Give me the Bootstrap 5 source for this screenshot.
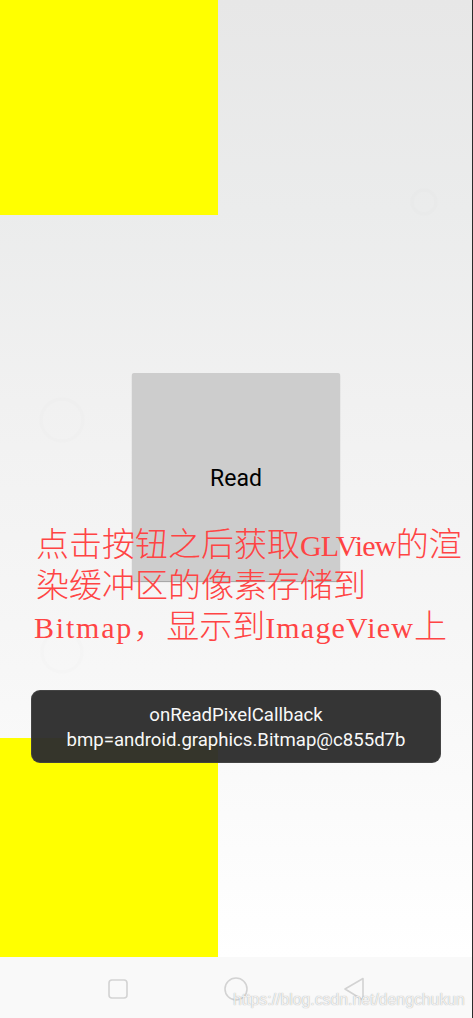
<!DOCTYPE html>
<html lang="zh">
<head>
<meta charset="utf-8">
<title>Read</title>
<link href="https://cdn.jsdelivr.net/npm/bootstrap@5.3.0/dist/css/bootstrap.min.css" rel="stylesheet">
<style>
html,body{height:100%;margin:0;overflow:hidden;background:#2b2b2b}
.phone-app{height:957px;width:472px;background:linear-gradient(180deg,#e7e7e7 0%,#ebecec 22%,#f1f1f1 42%,#f7f7f7 70%,#fff 100%);position:relative}
.fill-block{width:218px;height:215px;background:#ff0;flex:none}
.fill-block.lower{height:219px}
.read-btn{width:208px;height:208px;background:#cdcdcd;border:0;border-radius:2px;box-shadow:0 1px 1px rgba(0,0,0,.35);font:400 23px/1 Roboto,sans-serif;color:#000;padding:4px 0 0;flex:none}
.ghost-layer{position:absolute;left:0;top:0;pointer-events:none}
.ghost-label{position:absolute;left:100px;top:398px;font:400 19px/24px Roboto,sans-serif;color:rgba(0,0,0,.018)}
.note{position:absolute;left:34px;top:522px;width:436px;color:#f44;font:300 33px/41px "Noto Sans CJK SC",sans-serif;white-space:nowrap}
.note-line{height:41px;overflow:visible}
.note-line.indent{padding-left:2px}
.la{font-family:"Liberation Serif",serif;font-size:30px;line-height:0;font-weight:400}
.la-gl{letter-spacing:-.8px}
.la-bit{letter-spacing:1.8px}
.la-img{letter-spacing:1.2px}
.toast-msg{position:absolute;left:31px;top:690px;width:410px;height:73px;background:rgba(45,45,45,.96);border-radius:9px;box-shadow:inset 0 0 0 1px rgba(255,255,255,.08);color:#f8f8f8;font:400 18.6px/25px Roboto,sans-serif;padding-top:13px;white-space:nowrap}
.sys-nav{height:61px;width:472px;background:#f9f9f9;position:relative}
.sys-nav svg{display:block}
.watermark{position:absolute;left:233px;top:33px;font:400 15.8px/20px "Liberation Sans",sans-serif;color:rgba(255,255,255,.85);text-shadow:0 0 1px rgba(120,120,120,.75);white-space:nowrap}
</style>
</head>
<body>
<div class="phone-app d-flex flex-column">
  <div class="fill-block"></div>
  <button class="read-btn btn m-auto" type="button">Read</button>
  <div class="fill-block lower"></div>
  <svg class="ghost-layer" width="472" height="957" viewBox="0 0 472 957" fill="none" stroke="#000" stroke-opacity=".006" stroke-width="4">
    <circle cx="62" cy="420" r="21"/>
    <circle cx="62" cy="652" r="20"/>
    <circle cx="424" cy="202" r="12"/>
  </svg>
  <div class="ghost-label">For iPhone</div>
  <div class="note">
    <div class="note-line indent">点击按钮之后获取<span class="la la-gl">GLView</span>的渲</div>
    <div class="note-line indent">染缓冲区的像素存储到</div>
    <div class="note-line"><span class="la la-bit">Bitmap</span>，显示到<span class="la la-img">ImageView</span>上</div>
  </div>
  <div class="toast-msg text-center">onReadPixelCallback<br>bmp=android.graphics.Bitmap@c855d7b</div>
</div>
<div class="sys-nav">
  <svg width="472" height="61" viewBox="0 0 472 61" fill="none" stroke="#d3d3d3" stroke-width="1.6" stroke-linejoin="round">
    <rect x="109" y="23" width="18" height="18" rx="3"/>
    <circle cx="236" cy="32" r="11"/>
    <path d="M363 21.5 345 32l18 11z"/>
  </svg>
  <span class="watermark">https://blog.csdn.net/dengchukun</span>
</div>
</body>
</html>
